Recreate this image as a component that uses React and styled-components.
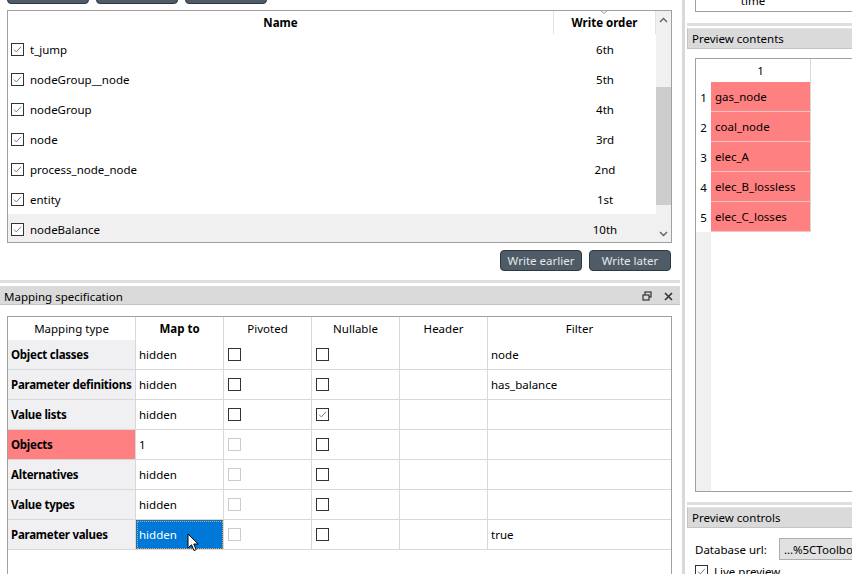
import React from "react";
import styled, { createGlobalStyle } from "styled-components";

const GlobalStyle = createGlobalStyle`
  html, body {
    margin: 0;
    padding: 0;
    background: #fff;
  }
  body {
    font-family: "Noto Sans", "Open Sans", sans-serif;
    font-size: 11.5px;
    color: #000;
  }
`;

const Page = styled.div`
  position: relative;
  display: flex;
  width: 852px;
  height: 574px;
  overflow: hidden;
  background: #fff;
`;

const LeftColumn = styled.div`
  width: 680px;
  flex-shrink: 0;
  display: flex;
  flex-direction: column;
`;

const VSplitter = styled.div`
  width: 3px;
  margin-left: 2px;
  flex-shrink: 0;
  background: #d9d9d9;
`;

const RightColumn = styled.div`
  flex: 1;
  min-width: 0;
  display: flex;
  flex-direction: column;
  padding-left: 2px;
`;

const ButtonRow = styled.div`
  display: flex;
  gap: 7px;
  justify-content: ${(p) => (p.$end ? "flex-end" : "flex-start")};
  padding: ${(p) => (p.$end ? "0 9px 0 0" : "0 0 0 7px")};
  margin-top: ${(p) => p.$top}px;
`;

const SlateButton = styled.button`
  width: 82px;
  height: ${(p) => p.$h || 21}px;
  box-sizing: border-box;
  border: 1px solid #2e3841;
  border-radius: 4px;
  background: #4f5b66;
  color: #e4e8ec;
  font-family: inherit;
  font-size: 11.5px;
  padding: 0;
`;

const OrderTable = styled.div`
  margin: 6px 0 0 7px;
  width: 665px;
  height: 233px;
  box-sizing: border-box;
  border: 1px solid #a0a0a0;
  display: grid;
  grid-template-columns: 1fr 15px;
  overflow: hidden;
`;

const OrderContent = styled.div`
  display: flex;
  flex-direction: column;
  overflow: hidden;
`;

const OrderHeader = styled.div`
  display: grid;
  grid-template-columns: 546px 102px;
  height: 23px;
  flex-shrink: 0;
`;

const HeadCell = styled.div`
  position: relative;
  display: flex;
  align-items: center;
  justify-content: center;
  font-weight: ${(p) => (p.$bold ? 700 : 400)};
  box-sizing: border-box;
  border-right: 1px solid #e3e3e3;
`;

const SortMark = styled.svg`
  position: absolute;
  top: -2px;
  left: 45px;
`;

const OrderRow = styled.div`
  display: grid;
  grid-template-columns: 546px 102px;
  height: 30px;
  flex-shrink: 0;
  background: ${(p) => (p.$hover ? "#f0f0f0" : "#fff")};
`;

const NameCell = styled.div`
  display: flex;
  align-items: center;
  gap: 6px;
  padding-left: 3px;
`;

const OrderCell = styled.div`
  display: flex;
  align-items: center;
  justify-content: center;
`;

const ScrollBar = styled.div`
  background: #f0f0f0;
  display: flex;
  flex-direction: column;
  align-items: center;
`;

const ScrollArrow = styled.div`
  height: 17px;
  display: flex;
  align-items: center;
  justify-content: center;
  margin-top: ${(p) => (p.$down ? "auto" : "0")};
`;

const ScrollThumb = styled.div`
  width: 15px;
  height: 118px;
  margin-top: 59px;
  background: #cdcdcd;
`;

const HSplitter = styled.div`
  height: 3px;
  flex-shrink: 0;
  background: #dedede;
  margin-top: ${(p) => p.$top}px;
`;

const DockTitle = styled.div`
  height: 19px;
  flex-shrink: 0;
  margin-top: ${(p) => p.$top || 2}px;
  display: flex;
  align-items: center;
  padding: ${(p) => (p.$framed ? "0" : "2px")} 0 0 4px;
  box-sizing: ${(p) => (p.$framed ? "content-box" : "border-box")};
  gap: 6px;
  background: #dadada;
  border-bottom: 1px solid #c4c4c4;
  border-left: ${(p) => (p.$framed ? "1px solid #c4c4c4" : "none")};
  border-top: ${(p) => (p.$framed ? "1px solid #e4e4e4" : "none")};
  white-space: nowrap;
`;

const DockIcons = styled.div`
  margin-left: auto;
  display: flex;
  gap: 12px;
  padding-right: 7px;
  align-items: center;
`;

const MappingTable = styled.div`
  margin: 11px 0 0 7px;
  width: 665px;
  flex: 1;
  box-sizing: border-box;
  border: 1px solid #a0a0a0;
  border-bottom: none;
  display: grid;
  grid-template-columns: 128px 88px 88px 88px 88px 1fr;
  grid-template-rows: 23px;
  grid-auto-rows: 30px;
  align-content: start;
`;

const MapHead = styled.div`
  display: flex;
  align-items: center;
  justify-content: center;
  font-weight: ${(p) => (p.$bold ? 700 : 400)};
  box-sizing: border-box;
  border-right: ${(p) => (p.$last ? "none" : "1px solid #d8d8d8")};
`;

const MapCell = styled.div`
  display: flex;
  align-items: center;
  box-sizing: border-box;
  padding-left: ${(p) => (p.$box ? 4 : 3)}px;
  border-right: ${(p) => (p.$last ? "none" : "1px solid #d8d8d8")};
  border-bottom: 1px solid #d8d8d8;
  font-weight: ${(p) => (p.$heading ? 700 : 400)};
  letter-spacing: ${(p) => (p.$heading ? "-0.25px" : "normal")};
  white-space: nowrap;
  overflow: hidden;
  background: ${(p) =>
    p.$error ? "#ff8080" : p.$heading ? "#f0f0f3" : p.$selected ? "#0078d7" : "#fff"};
  color: ${(p) => (p.$selected ? "#fff" : "#000")};
  outline: ${(p) => (p.$selected ? "1px dotted #e8a040" : "none")};
  outline-offset: -2px;
`;

const CheckBox = styled.span`
  width: 13px;
  height: 13px;
  box-sizing: border-box;
  flex-shrink: 0;
  border: 1px solid ${(p) => (p.$disabled ? "#cccccc" : "#333333")};
  background: #fff;
  display: inline-flex;
  align-items: center;
  justify-content: center;
`;

const TimeBox = styled.div`
  margin: -18px 0 0 8px;
  height: 30px;
  flex-shrink: 0;
  box-sizing: border-box;
  border-left: 1px solid #a0a0a0;
  border-bottom: 1px solid #a0a0a0;
  display: flex;
`;

const TimeLabel = styled.div`
  width: 114px;
  padding-top: 11px;
  text-align: center;
  line-height: 16px;
`;

const PreviewTable = styled.div`
  margin: 9px 0 0 8px;
  height: 434px;
  flex-shrink: 0;
  box-sizing: border-box;
  border: 1px solid #a0a0a0;
  border-right: none;
  display: grid;
  grid-template-columns: 15px 100px 1fr;
  grid-template-rows: 23px repeat(5, 30px) 1fr;
`;

const Blank = styled.div`
  background: #fff;
`;

const ColHead = styled.div`
  display: flex;
  align-items: center;
  justify-content: center;
  border-right: 1px solid #d8d8d8;
`;

const RowNum = styled.div`
  display: flex;
  align-items: center;
  justify-content: center;
  background: #fff;
`;

const PreviewCell = styled.div`
  display: flex;
  align-items: center;
  padding-left: 4px;
  background: #ff8080;
  border-bottom: 1px solid #f4c4c4;
  border-right: 1px solid #d8d8d8;
  white-space: nowrap;
`;

const RowHeadFill = styled.div`
  background: #f0f0f0;
`;

const Controls = styled.div`
  display: flex;
  flex-direction: column;
  gap: 4px;
  padding: 10px 0 0 8px;
`;

const ControlRow = styled.div`
  display: flex;
  align-items: center;
  gap: 6px;
  white-space: nowrap;
`;

const Combo = styled.div`
  margin-left: 6px;
  height: 22px;
  flex: 1;
  box-sizing: border-box;
  border: 1px solid #adadad;
  border-right: none;
  background: #e1e1e1;
  display: flex;
  align-items: center;
  padding-left: 4px;
  overflow: hidden;
`;

const Cursor = styled.svg`
  position: absolute;
  left: 187px;
  top: 533px;
`;

function Check({ checked, disabled }) {
  return (
    <CheckBox $disabled={disabled}>
      {checked && (
        <svg width="11" height="11" viewBox="0 0 11 11">
          <path d="M2 5.6 L4.3 7.9 L9 2.8" fill="none" stroke="#7a7a7a" strokeWidth="1" />
        </svg>
      )}
    </CheckBox>
  );
}

function Chevron({ down }) {
  return (
    <svg width="9" height="6" viewBox="0 0 9 6">
      <path
        d={down ? "M1 1 L4.5 4.5 L8 1" : "M1 5 L4.5 1.5 L8 5"}
        fill="none"
        stroke="#606060"
        strokeWidth="1.4"
      />
    </svg>
  );
}

const orderRows = [
  ["t_jump", "6th"],
  ["nodeGroup__node", "5th"],
  ["nodeGroup", "4th"],
  ["node", "3rd"],
  ["process_node_node", "2nd"],
  ["entity", "1st"],
  ["nodeBalance", "10th"],
];

const mappingRows = [
  { type: "Object classes", map: "hidden", pivot: true, nullable: false, filter: "node" },
  { type: "Parameter definitions", map: "hidden", pivot: true, nullable: false, filter: "has_balance" },
  { type: "Value lists", map: "hidden", pivot: true, nullable: true, filter: "" },
  { type: "Objects", map: "1", pivot: false, nullable: false, filter: "", error: true },
  { type: "Alternatives", map: "hidden", pivot: false, nullable: false, filter: "" },
  { type: "Value types", map: "hidden", pivot: false, nullable: false, filter: "" },
  { type: "Parameter values", map: "hidden", pivot: false, nullable: false, filter: "true", selected: true },
];

const previewRows = ["gas_node", "coal_node", "elec_A", "elec_B_lossless", "elec_C_losses"];

export default function App() {
  return (
    <Page>
      <GlobalStyle />
      <LeftColumn>
        <ButtonRow $top={-18}>
          <SlateButton $h={22} />
          <SlateButton $h={22} />
          <SlateButton $h={22} />
        </ButtonRow>

        <OrderTable>
          <OrderContent>
            <OrderHeader>
              <HeadCell $bold>Name</HeadCell>
              <HeadCell $bold>
                <SortMark width="10" height="6" viewBox="0 0 10 6">
                  <path d="M1 1 L5 4.5 L9 1" fill="none" stroke="#9a9a9a" strokeWidth="1" />
                </SortMark>
                Write order
              </HeadCell>
            </OrderHeader>
            {orderRows.map(([name, order], i) => (
              <OrderRow key={name} $hover={i === orderRows.length - 1}>
                <NameCell>
                  <Check checked />
                  {name}
                </NameCell>
                <OrderCell>{order}</OrderCell>
              </OrderRow>
            ))}
          </OrderContent>
          <ScrollBar>
            <ScrollArrow>
              <Chevron />
            </ScrollArrow>
            <ScrollThumb />
            <ScrollArrow $down>
              <Chevron down />
            </ScrollArrow>
          </ScrollBar>
        </OrderTable>

        <ButtonRow $end $top={7}>
          <SlateButton>Write earlier</SlateButton>
          <SlateButton>Write later</SlateButton>
        </ButtonRow>

        <HSplitter $top={9} />
        <DockTitle $top={3}>
          Mapping specification
          <DockIcons>
            <svg width="10" height="10" viewBox="0 0 10 10">
              <rect x="3" y="1" width="6" height="5" fill="none" stroke="#333" strokeWidth="1.2" />
              <rect x="1" y="4" width="6" height="5" fill="#dadada" stroke="#333" strokeWidth="1.2" />
            </svg>
            <svg width="9" height="9" viewBox="0 0 9 9">
              <path d="M1 1 L8 8 M8 1 L1 8" stroke="#333" strokeWidth="1.6" />
            </svg>
          </DockIcons>
        </DockTitle>

        <MappingTable>
          <MapHead>Mapping type</MapHead>
          <MapHead $bold>Map to</MapHead>
          <MapHead>Pivoted</MapHead>
          <MapHead>Nullable</MapHead>
          <MapHead>Header</MapHead>
          <MapHead $last>Filter</MapHead>
          {mappingRows.map((r) => (
            <React.Fragment key={r.type}>
              <MapCell $heading $error={r.error}>{r.type}</MapCell>
              <MapCell $selected={r.selected}>{r.map}</MapCell>
              <MapCell $box>
                <Check disabled={!r.pivot} />
              </MapCell>
              <MapCell $box>
                <Check checked={r.nullable} />
              </MapCell>
              <MapCell />
              <MapCell $last>{r.filter}</MapCell>
            </React.Fragment>
          ))}
        </MappingTable>
      </LeftColumn>

      <VSplitter />

      <RightColumn>
        <TimeBox>
          <TimeLabel>time</TimeLabel>
        </TimeBox>
        <HSplitter $top={11} />
        <DockTitle $framed>Preview contents</DockTitle>
        <PreviewTable>
          <Blank />
          <ColHead>1</ColHead>
          <Blank />
          {previewRows.map((v, i) => (
            <React.Fragment key={v}>
              <RowNum>{i + 1}</RowNum>
              <PreviewCell>{v}</PreviewCell>
              <Blank />
            </React.Fragment>
          ))}
          <RowHeadFill />
          <Blank />
          <Blank />
        </PreviewTable>
        <HSplitter $top={10} />
        <DockTitle $framed>Preview controls</DockTitle>
        <Controls>
          <ControlRow>
            Database url:
            <Combo>…%5CToolbox</Combo>
          </ControlRow>
          <ControlRow>
            <Check checked />
            Live preview
          </ControlRow>
        </Controls>
      </RightColumn>

      <Cursor width="13" height="20" viewBox="0 0 13 20">
        <path
          d="M1 1 L1 15 L4.5 11.8 L7 17.6 L9.2 16.6 L6.8 11 L11.2 11 Z"
          fill="#fff"
          stroke="#000"
          strokeWidth="1"
          strokeLinejoin="round"
        />
      </Cursor>
    </Page>
  );
}
